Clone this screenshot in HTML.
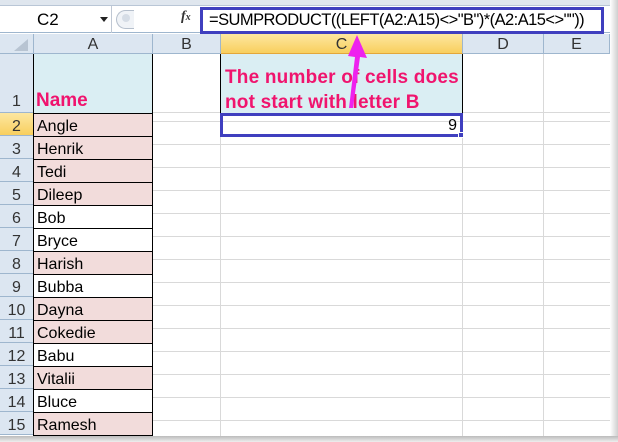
<!DOCTYPE html><html><head><style>
body{margin:0;width:618px;height:442px;overflow:hidden;background:#fff;font-family:"Liberation Sans",Arial,sans-serif;position:relative}
.a{position:absolute;box-sizing:border-box}
.hdr{background:#dce6f1;border-right:1px solid #9eb6ce;border-bottom:1px solid #9eb6ce;text-align:center;font-size:16px;color:#333;line-height:21px}
.rh{background:#dce6f1;border-bottom:1px solid #9eb6ce;border-right:1px solid #9eb6ce;text-align:center;font-size:16px;color:#333}
.cell{font-size:16px;color:#000;padding-left:3px}
</style></head><body>
<div class="a" style="left:0;top:0;width:618px;height:6px;background:#dfe6ee;border-bottom:1px solid #b9c6d6"></div>
<div class="a" style="left:0;top:6px;width:618px;height:27px;background:#fff;border-bottom:1px solid #9eb6ce"></div>
<div class="a" style="left:0;top:6px;width:112px;height:27px;border-right:1px solid #c0c8d4;font-size:17px;line-height:27px;padding-left:37px">C2</div>
<div class="a" style="left:100px;top:17px;width:0;height:0;border-left:4px solid transparent;border-right:4px solid transparent;border-top:5px solid #222"></div>
<div class="a" style="left:116px;top:10px;width:18px;height:19px;border:1px solid #b5bfcc;border-radius:10px 0 0 10px;border-right:none;background:#f0f3f7"></div>
<div class="a" style="left:122px;top:14px;width:8px;height:8px;border-radius:50%;background:#d6dde6"></div>
<div class="a" style="left:181px;top:9px;font-family:'Liberation Serif',serif;font-style:italic;font-size:14px;font-weight:bold;color:#333">f<span style="font-size:10px">x</span></div>
<div class="a" style="left:200px;top:7px;width:404px;height:27px;border:3px solid #3f3fbf;font-size:16.5px;line-height:21px;padding-left:6px;white-space:nowrap;letter-spacing:-0.55px;overflow:hidden">=SUMPRODUCT((LEFT(A2:A15)&lt;&gt;"B")*(A2:A15&lt;&gt;""))</div>
<div class="a" style="left:610px;top:0;width:8px;height:442px;background:linear-gradient(90deg,#fff,#cfcfcf)"></div>
<div class="a hdr" style="left:0;top:34px;width:34px;height:20px"></div>
<div class="a" style="left:14px;top:39px;width:0;height:0;border-left:14px solid transparent;border-bottom:12px solid #b8c4d2"></div>
<div class="a hdr" style="left:34px;top:34px;width:119px;height:20px">A</div>
<div class="a hdr" style="left:153px;top:34px;width:68px;height:20px">B</div>
<div class="a hdr" style="left:221px;top:34px;width:242px;height:20px;background:linear-gradient(#fde7a0,#f8cf5e);border-bottom:1px solid #e3a73a">C</div>
<div class="a hdr" style="left:463px;top:34px;width:81px;height:20px">D</div>
<div class="a hdr" style="left:544px;top:34px;width:66px;height:20px">E</div>
<div class="a" style="left:34px;top:54px;width:576px;height:382px;background-image:repeating-linear-gradient(#fff 0 22px,#d9d9d9 22px 23px);background-position:0 -1px"></div>
<div class="a" style="left:34px;top:54px;width:576px;height:59px;background:#fff;border-bottom:1px solid #d9d9d9"></div>
<div class="a" style="left:220px;top:54px;width:1px;height:382px;background:#d9d9d9"></div>
<div class="a" style="left:462px;top:54px;width:1px;height:382px;background:#d9d9d9"></div>
<div class="a" style="left:543px;top:54px;width:1px;height:382px;background:#d9d9d9"></div>
<div class="a" style="left:0;top:436px;width:618px;height:6px;background:linear-gradient(#bbb,#eee)"></div>
<div class="a rh" style="left:0;top:54px;width:34px;height:59px;line-height:96px">1</div>
<div class="a" style="left:33px;top:54px;width:120px;height:60px;background:#daeef3;border-left:1px solid #000;border-right:1px solid #000;border-bottom:1px solid #000"></div>
<div class="a" style="left:36px;top:90px;font-size:19px;font-weight:bold;color:#f0146e">Name</div>
<div class="a" style="left:220px;top:54px;width:243px;height:60px;background:#daeef3;border-left:1px solid #000;border-right:1px solid #000"></div>
<div class="a" style="left:225px;top:65px;font-size:19px;font-weight:bold;color:#f0146e;line-height:25px;white-space:nowrap;letter-spacing:0.2px">The number of cells does<br>not start with letter B</div>
<div id="rows"></div>
<script>
var names=["Angle","Henrik","Tedi","Dileep","Bob","Bryce","Harish","Bubba","Dayna","Cokedie","Babu","Vitalii","Bluce","Ramesh"];
var pink=[1,1,1,1,0,0,1,0,1,1,0,1,0,1];var h="";
for(var i=0;i<14;i++){var t=113+i*23;
h+='<div class="a rh" style="left:0;top:'+t+'px;width:34px;height:23px;line-height:27px;'+(i==0?'background:linear-gradient(#fde7a0,#f8cf5e);':'')+'">'+(i+2)+'</div>';
h+='<div class="a cell" style="left:33px;top:'+t+'px;width:120px;height:24px;background:'+(pink[i]?'#f2dcdb':'#fff')+';border:1px solid #000;line-height:26px">'+names[i]+'</div>';}
document.getElementById("rows").innerHTML=h;
</script>
<div class="a" style="left:220px;top:113px;width:243px;height:24px;border:3px solid #3f3fbf;text-align:right;font-size:16px;line-height:20px;padding-right:3px">9</div>
<div class="a" style="left:458px;top:132px;width:6px;height:6px;background:#3f3fbf;border:1px solid #fff"></div>
<svg class="a" style="left:0;top:0" width="618" height="442"><polygon points="357,35 367,58 360,57 353,108 349,108 355,57 348,56" fill="#ee22ee"/></svg>
</body></html>
